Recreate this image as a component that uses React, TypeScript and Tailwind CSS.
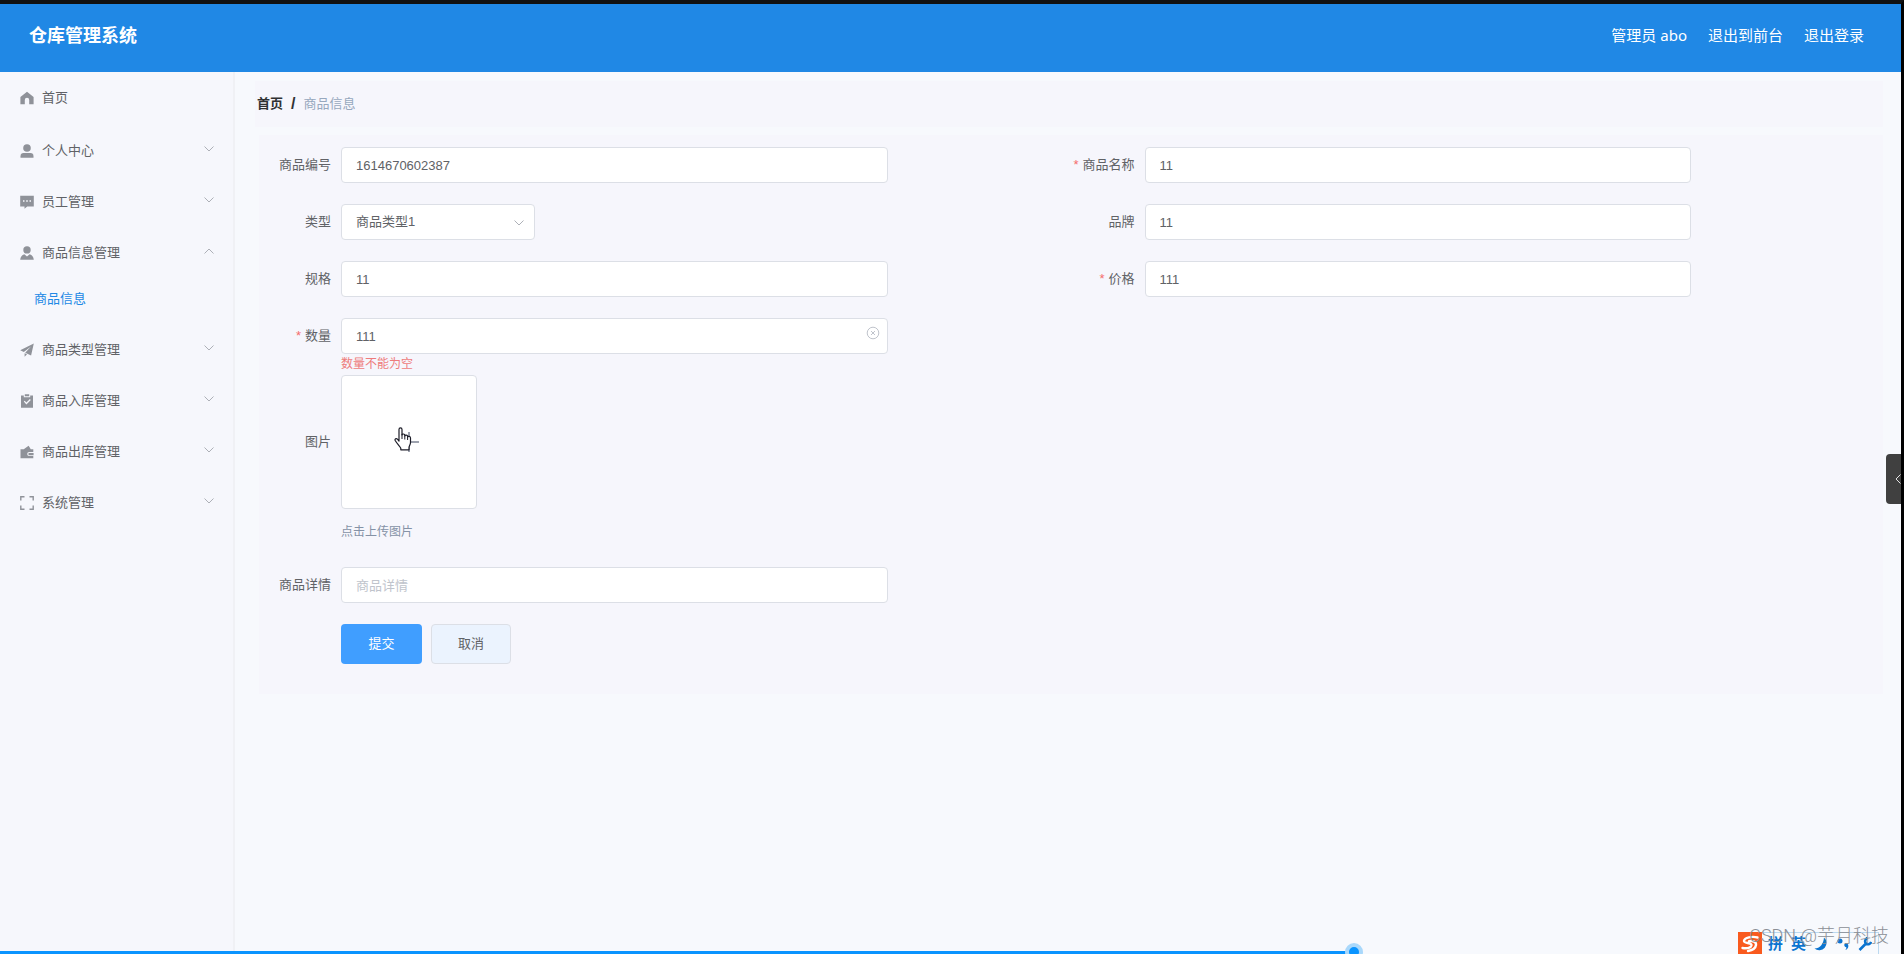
import type { ReactNode } from "react";

type FieldProps = {
  id: string;
  label: string;
  value?: string;
  placeholder?: string;
  required?: boolean;
  children?: ReactNode;
};

const menuItems = [
  { icon: "user", title: "个人中心" },
  { icon: "comment", title: "员工管理" },
  { icon: "custom", title: "商品信息管理", children: ["商品信息"] },
  { icon: "promotion", title: "商品类型管理" },
  { icon: "claim", title: "商品入库管理" },
  { icon: "wallet", title: "商品出库管理" },
  { icon: "screen", title: "系统管理" },
];

const icons: Record<string, ReactNode> = {
  home: <path d="M7 .8 13.6 6v7.2H9.2V9a2.2 2.2 0 0 0-4.4 0v4.2H.4V6z" />,
  user: (
    <>
      <circle cx="7" cy="4" r="3.8" />
      <path d="M.5 13.8v-1.6C.5 10 1.7 9 3.5 9h7c1.8 0 3 1 3 3.2v1.6z" />
    </>
  ),
  comment: (
    <path
      fillRule="evenodd"
      d="M.2.8h13.600v10.700H7.200l-2.700 2.300v-2.300H.2zM3 5.200v1.600h1.500V5.200zm3.200 0v1.600h1.600V5.200zm3.300 0v1.600H11V5.200z"
    />
  ),
  custom: (
    <>
      <circle cx="7" cy="3.9" r="3.7" />
      <path d="M.2 13.8C.5 10.600 1.900 9 4.300 8.200L7 10.500l2.700-2.300c2.400.8 3.800 2.400 4.100 5.600z" />
    </>
  ),
  promotion: <path d="M13.800.4.2 7.200l3.600 1.700L11 3.400 5.200 9.700l5.900 2.800zM4.600 10.200v3.600L7 11.300z" />,
  claim: (
    <path
      fillRule="evenodd"
      d="M1 1.400h2.800v1.800h6.400V1.400H13v12.400H1zM4.800.2h4.400v2H4.800zm-1 7.400 2.600 2.800L10.800 6l-.9-.9-3.500 3.500-1.700-1.900z"
    />
  ),
  wallet: (
    <path
      fillRule="evenodd"
      d="M.5 4.200h3.200L8.600.8l2.200 3.400h2.500v2.900H9.200a2 2 0 0 0 0 4h4.100v2.200H.5zM9.400 8h4.200v2.200H9.400a1.100 1.100 0 0 1 0-2.200z"
    />
  ),
  screen: (
    <path
      d="M.8 4.500V.8h3.700M9.500.8h3.700v3.700M13.200 9.500v3.700H9.500M4.500 13.200H.8V9.500"
      fill="none"
      stroke="currentColor"
      strokeWidth="1.400"
    />
  ),
};

const MenuIcon = ({ name }: { name: string }) => (
  <svg viewBox="0 0 14 14" className="w-3.5 h-3.5 shrink-0 text-[#8f9299]" fill="currentColor">
    {icons[name]}
  </svg>
);

const Chevron = ({ up = false }: { up?: boolean }) => (
  <svg viewBox="0 0 10 6" className={`w-2.5 h-1.5 ${up ? "rotate-180" : ""}`} fill="none" stroke="#adb0b7">
    <path d="M.5.500 5 5l4.500-4.500" />
  </svg>
);

const inputClass =
  "w-full h-9 px-3.5 rounded border border-[#dcdfe6] bg-white text-[13px] text-[#606266] placeholder:text-[#c0c4cc] outline-none focus:border-[#409eff]";

const FormRow = ({ id, label, required, children }: FieldProps) => (
  <div className="flex items-center w-[78%] mb-[21px]">
    <label htmlFor={id} className="w-20 shrink-0 pr-2.5 text-right">
      {required && <span className="mr-1 text-[#f56c6c]">*</span>}
      {label}
    </label>
    <div className="relative flex-1">{children}</div>
  </div>
);

const TextField = ({ value, placeholder, children, ...row }: FieldProps) => (
  <FormRow {...row}>
    <input id={row.id} type="text" defaultValue={value} placeholder={placeholder} className={inputClass} />
    {children}
  </FormRow>
);

const Header = () => (
  <header className="flex items-center justify-between h-[68px] pl-[29px] pr-[37px] pb-1.5 bg-[#2088e5] text-white">
    <h1 className="text-lg font-bold">仓库管理系统</h1>
    <div className="flex gap-[21px] text-[15px]">
      <span>管理员 abo</span>
      <a href="#front">退出到前台</a>
      <a href="#logout">退出登录</a>
    </div>
  </header>
);

const Sidebar = () => (
  <nav className="w-[235px] shrink-0 border-r-2 border-[#f0f1f5] bg-[#f6f7fc] text-[#606266]">
    <a href="#home" className="flex items-center gap-2 h-[53px] pl-5 pb-0.5">
      <MenuIcon name="home" />
      首页
    </a>
    {menuItems.map((item) => (
      <div key={item.title}>
        <button type="button" className="flex items-center gap-2 w-full h-[51px] pl-5 pr-[19px]">
          <MenuIcon name={item.icon} />
          <span className="flex-1 text-left">{item.title}</span>
          <span className="pb-1">
            <Chevron up={!!item.children} />
          </span>
        </button>
        {item.children?.map((child) => (
          <a key={child} href="#goods" className="flex items-center h-[46px] pb-1 pl-[34px] text-[#2088e5]">
            {child}
          </a>
        ))}
      </div>
    ))}
  </nav>
);

const HandCursor = () => (
  <svg viewBox="0 0 18 24" className="absolute left-[52px] top-[51px] w-[18px] h-6" fill="white" stroke="#1b1b26">
    <path
      strokeWidth="1.200"
      strokeLinejoin="round"
      d="M5 14V2.400C5 .4 8 .4 8 2.400V8c0-1.400 2.800-1.300 2.800.3V9c.2-1.400 2.800-1.200 2.800.4v.7c.3-1.200 2.900-1 2.900.8v4.600c0 2-1.500 3.600-1.500 5v2.300H6.800v-1.600C5.800 19.500 2.300 15.700 1.200 13.500c-.7-1.500 1-2.600 2.200-1.300z"
    />
    <path d="M8 7v5M10.800 8.500v4M13.600 10v3" />
  </svg>
);

const GoodsForm = () => (
  <form className="ml-1 pl-0.5 pr-[15px] pt-3 pb-2.5 bg-[#f6f6fc] text-[#606266]">
    <div className="grid grid-cols-2">
      <TextField id="code" label="商品编号" value="1614670602387" />
      <TextField id="name" label="商品名称" value="11" required />
      <FormRow id="type" label="类型">
        <div className="relative w-[194px]">
          <select id="type" defaultValue="商品类型1" className={`${inputClass} appearance-none`}>
            <option>商品类型1</option>
          </select>
          <span className="absolute right-[11px] top-4 pointer-events-none">
            <Chevron />
          </span>
        </div>
      </FormRow>
      <TextField id="brand" label="品牌" value="11" />
      <TextField id="spec" label="规格" value="11" />
      <TextField id="price" label="价格" value="111" required />
    </div>
    <div className="w-1/2">
      <TextField id="count" label="数量" value="111" required>
        <svg viewBox="0 0 14 14" className="absolute right-2 top-2 w-3.5 h-3.5" fill="none" stroke="#c0c4cc">
          <circle cx="7" cy="7" r="5.800" />
          <path d="m5 5 4 4M9 5 5 9" />
        </svg>
        <p className="absolute left-0 top-full text-xs leading-5 text-[#ee7b7b]">数量不能为空</p>
      </TextField>
    </div>
    <div className="flex items-center">
      <span className="w-20 pr-2.5 text-right">图片</span>
      <button
        type="button"
        aria-label="点击上传图片"
        className="relative flex items-center justify-center w-[136px] h-[134px] rounded border border-[#dcdfe6] bg-white"
      >
        <svg viewBox="0 0 20 20" className="w-5 h-5" stroke="#9da2ae" strokeWidth="2">
          <path d="M10 0v20M0 10h20" />
        </svg>
        <HandCursor />
      </button>
    </div>
    <p className="mt-[13px] mb-[25px] pl-20 text-xs leading-5 text-[#8592a6]">点击上传图片</p>
    <div className="w-1/2">
      <TextField id="detail" label="商品详情" placeholder="商品详情" />
    </div>
    <div className="flex gap-[9px] pl-20 mb-5">
      <button type="submit" className="w-[81px] h-10 rounded bg-[#409eff] text-white">
        提交
      </button>
      <button type="button" className="w-20 h-10 rounded border border-[#dcdfe6] bg-[#ebf3fe]">
        取消
      </button>
    </div>
  </form>
);

const InputMethodBar = () => (
  <div className="absolute right-[22px] bottom-0 flex items-center w-[141px] h-[22px] text-[15px] font-bold text-[#0b74d0]">
    <div className="flex items-center justify-center w-6 h-full bg-[#f95a1e]">
      <svg viewBox="0 0 20 20" className="w-5 h-5" fill="none" stroke="white" strokeWidth="2.400" strokeLinecap="round">
        <path d="M17.500 4.500C12 3 4.500 4.500 4 8c-.4 2.500 8 1.500 7.500 4.200C11 14.500 7 15.500 2.500 15" />
        <path d="M9 8.200c4-.8 7.500.5 7 3.800-.4 3-3.500 5.200-8 6" />
      </svg>
    </div>
    <div className="flex flex-1 items-center h-full pl-1.5 gap-2 border-t border-r border-[#bcd9ef] bg-[#f8fafd]">
      <span>拼</span>
      <span>英</span>
      <svg viewBox="0 0 14 14" className="w-3.5 h-3.5" fill="currentColor">
        <path d="M10 .5a7 7 0 1 1-9.500 11C6 11.500 9.500 7 10 .5z" />
      </svg>
      <svg viewBox="0 0 14 14" className="w-3.5 h-3.5" fill="currentColor">
        <circle cx="4" cy="4" r="2.500" />
        <path d="M9 6.500c3-1 4 2 3 4.200-.6 1.300-1.600 2-2.700 2.300 1-1.200 1.200-2 1-2.800-1.800.1-2.700-2.700-1.300-3.700z" />
      </svg>
      <svg viewBox="0 0 14 14" className="w-3.5 h-3.5" fill="none" stroke="currentColor" strokeWidth="2.600">
        <path d="M1.500 13 8 6.500M9.500.8C7 2 6.500 5 8 6.500s4.200.8 5.200-1.500" />
      </svg>
    </div>
  </div>
);

export default function App() {
  return (
    <div className="relative flex flex-col h-screen overflow-hidden border-t-4 border-r-[3px] border-t-[#111111] border-r-black bg-[#f7f9fd] font-['Noto_Sans','Noto_Sans_CJK_SC',sans-serif]">
      <Header />
      <div className="flex flex-1 text-[13px] leading-5 font-['Liberation_Sans','Noto_Sans_CJK_SC',sans-serif]">
        <Sidebar />
        <main className="flex-1 pt-[9px] pl-5 pr-[18px]">
          <div className="flex items-center gap-2 h-[46px] mb-2 pl-0.5 bg-[#f6f6fc]">
            <a href="#home" className="font-bold text-[#303133]">
              首页
            </a>
            <span className="text-base font-bold text-[#303133]">/</span>
            <span className="text-[#97a8be]">商品信息</span>
          </div>
          <GoodsForm />
        </main>
      </div>

      {/* drawer handle */}
      <button
        type="button"
        aria-label="展开"
        className="absolute right-0 top-[450px] flex items-center justify-end w-[15px] h-[50px] rounded-l-sm bg-[#404040]"
      >
        <svg viewBox="0 0 6 10" className="w-1.5 h-2.5" fill="none" stroke="#e5e5e5">
          <path d="M5.500.500 1 5l4.500 4.500" />
        </svg>
      </button>

      <InputMethodBar />
      <span className="absolute right-3 bottom-1 text-lg leading-7 text-[#8b8f96] font-['Roboto','Noto_Sans_CJK_SC',sans-serif] font-light">
        CSDN @芋月科技
      </span>

      {/* playback progress */}
      <div className="absolute left-0 bottom-0 w-[71.200%] h-[3px] bg-[#0a94ff]">
        <span className="absolute -right-[9px] -top-2 w-[18px] h-[18px] rounded-full border-4 border-[#a9d8fb] bg-[#0a94ff]" />
      </div>
    </div>
  );
}
